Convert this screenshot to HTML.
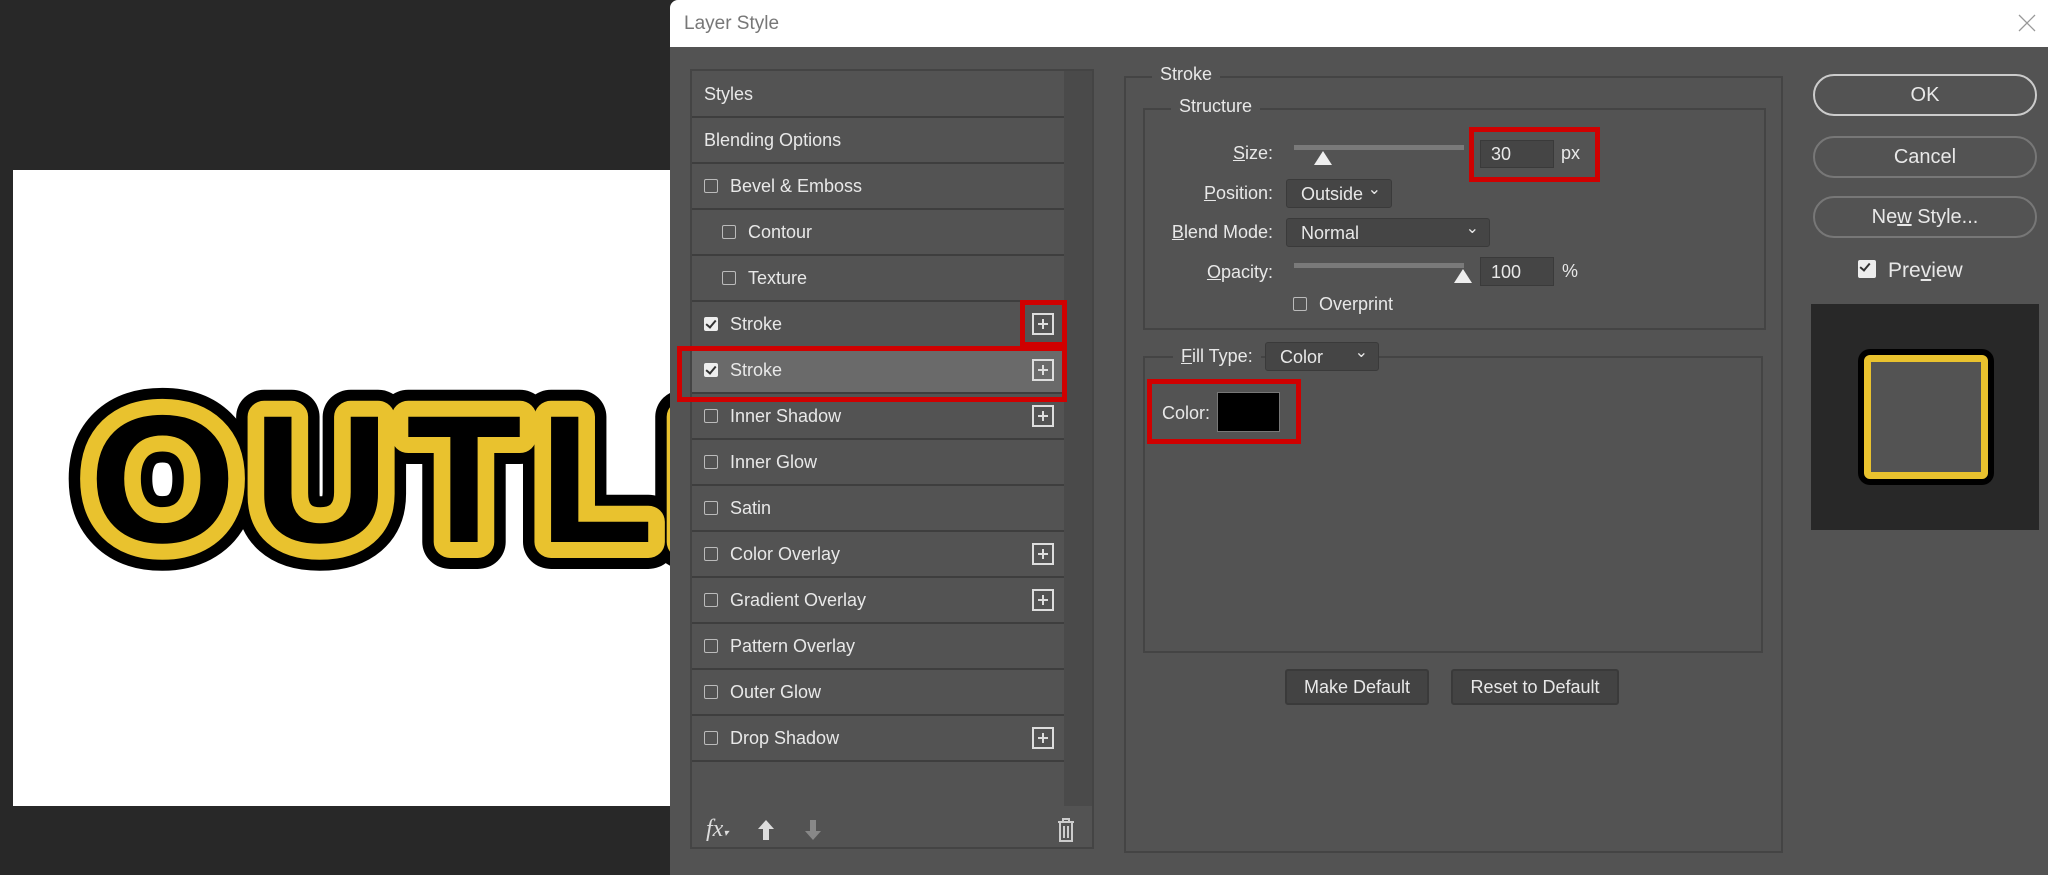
<!DOCTYPE html>
<html><head><meta charset="utf-8"><style>
*{margin:0;padding:0;box-sizing:border-box}
body{width:2048px;height:875px;background:#282828;position:relative;overflow:hidden;font-family:"Liberation Sans",sans-serif;color:#e8e8e8;font-size:18px}
.a{position:absolute}
.canvas{left:13px;top:170px;width:657px;height:636px;background:#fff;overflow:hidden}
.dlg{left:670px;top:0;width:1378px;height:875px;background:#535353;border-radius:8px 0 0 0;overflow:hidden}
.title{left:0;top:0;width:1378px;height:47px;background:#fff;color:#777;font-size:19px;padding:13px 0 0 14px}
.row{left:22px;width:372px;height:46px;background:#535353;border-bottom:2px solid #3e3e3e;line-height:44px;padding-left:12px}
.cb{display:inline-block;width:14px;height:14px;border:1.5px solid #bbb;border-radius:2px;vertical-align:-1px;margin-right:12px}
.cb.on{background:#eee;border-color:#eee;position:relative}
.cb.on:after{content:"";position:absolute;left:3px;top:0px;width:4px;height:8px;border:solid #333;border-width:0 2px 2px 0;transform:rotate(40deg)}
.plus{position:absolute;right:10px;top:11px;width:22px;height:22px;border:2px solid #ddd}
.plus:before{content:"";position:absolute;left:4px;top:8px;width:10px;height:2px;background:#ddd}
.plus:after{content:"";position:absolute;left:8px;top:4px;width:2px;height:10px;background:#ddd}
.red{border:5px solid #d00000}
.grp{border:2px solid #444}
.lbl{background:#535353;padding:0 8px}
.inp{background:#454545;border:1px solid #3a3a3a}
.dd{background:#454545;border:1px solid #3a3a3a;border-radius:3px;padding-left:14px;line-height:28px}
.dd:after{content:"⌄";position:absolute;right:10px;top:-4px;font-size:16px}
.btn{border:2px solid #ccc;border-radius:22px;text-align:center;font-size:20px;line-height:38px}
.rbtn{background:#434343;border:2px solid #3a3a3a;border-radius:3px;text-align:center;line-height:32px}
.thumb{width:0;height:0;border-left:9px solid transparent;border-right:9px solid transparent;border-bottom:14px solid #eee}
u{text-decoration:underline}
</style></head><body>
<div class="a canvas">
<svg width="657" height="636" style="position:absolute;left:0;top:0">
<g font-family="Liberation Sans" font-weight="bold" font-size="182" letter-spacing="16" transform="translate(76,0) scale(1.04,1)">
<text x="0" y="372" stroke="#000" stroke-width="54" stroke-linejoin="round" fill="#000">OUTLINE</text>
<text x="0" y="372" stroke="#e9c22e" stroke-width="32" stroke-linejoin="round" fill="#e9c22e">OUTLINE</text>
<text x="0" y="372" fill="#000">OUTLINE</text>
</g></svg>
</div>
<div class="a dlg">
<div class="a title">Layer Style</div>
<svg class="a" style="right:12px;top:14px" width="18" height="18"><path d="M1 1 L17 17 M17 1 L1 17" stroke="#999" stroke-width="1.3"/></svg>
<div class="a" style="left:20px;top:69px;width:404px;height:780px;border:2px solid #444"></div>
<div class="a" style="left:394px;top:71px;width:28px;height:735px;background:#4a4a4a"></div>
<div class="a row" style="top:72px">Styles</div>
<div class="a row" style="top:118px">Blending Options</div>
<div class="a row" style="top:164px"><span class="cb"></span>Bevel &amp; Emboss</div>
<div class="a row" style="top:210px;padding-left:30px"><span class="cb"></span>Contour</div>
<div class="a row" style="top:256px;padding-left:30px"><span class="cb"></span>Texture</div>
<div class="a row" style="top:302px"><span class="cb on"></span>Stroke<span class="plus"></span></div>
<div class="a row" style="top:348px;background:#6a6a6a"><span class="cb on"></span>Stroke<span class="plus"></span></div>
<div class="a row" style="top:394px"><span class="cb"></span>Inner Shadow<span class="plus"></span></div>
<div class="a row" style="top:440px"><span class="cb"></span>Inner Glow</div>
<div class="a row" style="top:486px"><span class="cb"></span>Satin</div>
<div class="a row" style="top:532px"><span class="cb"></span>Color Overlay<span class="plus"></span></div>
<div class="a row" style="top:578px"><span class="cb"></span>Gradient Overlay<span class="plus"></span></div>
<div class="a row" style="top:624px"><span class="cb"></span>Pattern Overlay</div>
<div class="a row" style="top:670px"><span class="cb"></span>Outer Glow</div>
<div class="a row" style="top:716px"><span class="cb"></span>Drop Shadow<span class="plus"></span></div>
<div class="a red" style="left:350px;top:300px;width:47px;height:47px"></div>
<div class="a red" style="left:7px;top:346px;width:390px;height:56px"></div>
<div class="a" style="left:36px;top:816px;font-style:italic;font-family:'Liberation Serif',serif;font-size:24px;color:#ddd">fx<span style="font-size:10px">▾</span></div>
<svg class="a" style="left:86px;top:818px" width="20" height="24"><path d="M10 2 L18 11 H13 V22 H7 V11 H2 Z" fill="#ddd"/></svg>
<svg class="a" style="left:133px;top:818px" width="20" height="24"><path d="M10 22 L18 13 H13 V2 H7 V13 H2 Z" fill="#888"/></svg>
<svg class="a" style="left:386px;top:817px" width="20" height="26"><path d="M2 5 H18 M7 5 V2 H13 V5 M4 6 V24 H16 V6 M8 9 V21 M12 9 V21" stroke="#ccc" stroke-width="2" fill="none"/></svg>
<div class="a grp" style="left:454px;top:76px;width:659px;height:777px"></div>
<div class="a lbl" style="left:482px;top:64px">Stroke</div>
<div class="a grp" style="left:473px;top:108px;width:623px;height:222px"></div>
<div class="a lbl" style="left:501px;top:96px">Structure</div>
<div class="a" style="left:540px;top:143px;width:63px;text-align:right"><u>S</u>ize:</div>
<div class="a" style="left:624px;top:145px;width:170px;height:5px;background:#7a7a7a"></div>
<div class="a thumb" style="left:644px;top:151px"></div>
<div class="a inp" style="left:810px;top:140px;width:74px;height:28px;padding:3px 10px">30</div>
<div class="a" style="left:891px;top:143px">px</div>
<div class="a red" style="left:799px;top:127px;width:131px;height:55px"></div>
<div class="a" style="left:480px;top:183px;width:123px;text-align:right"><u>P</u>osition:</div>
<div class="a dd" style="left:616px;top:179px;width:106px;height:29px">Outside</div>
<div class="a" style="left:480px;top:222px;width:123px;text-align:right"><u>B</u>lend Mode:</div>
<div class="a dd" style="left:616px;top:218px;width:204px;height:29px">Normal</div>
<div class="a" style="left:480px;top:262px;width:123px;text-align:right"><u>O</u>pacity:</div>
<div class="a" style="left:624px;top:263px;width:170px;height:5px;background:#7a7a7a"></div>
<div class="a thumb" style="left:784px;top:269px"></div>
<div class="a inp" style="left:810px;top:257px;width:74px;height:29px;padding:4px 10px">100</div>
<div class="a" style="left:892px;top:261px">%</div>
<div class="a" style="left:623px;top:294px"><span class="cb"></span>Overprint</div>
<div class="a grp" style="left:473px;top:356px;width:620px;height:297px"></div>
<div class="a lbl" style="left:503px;top:346px"><u>F</u>ill Type:</div>
<div class="a dd" style="left:595px;top:342px;width:114px;height:29px">Color</div>
<div class="a" style="left:492px;top:403px">Color:</div>
<div class="a" style="left:547px;top:392px;width:63px;height:40px;background:#000;border:1px solid #777"></div>
<div class="a red" style="left:477px;top:379px;width:154px;height:65px"></div>
<div class="a rbtn" style="left:615px;top:669px;width:144px;height:36px">Make Default</div>
<div class="a rbtn" style="left:781px;top:669px;width:168px;height:36px">Reset to Default</div>
<div class="a btn" style="left:1143px;top:74px;width:224px;height:42px">OK</div>
<div class="a btn" style="left:1143px;top:136px;width:224px;height:42px;border-color:#777">Cancel</div>
<div class="a btn" style="left:1143px;top:196px;width:224px;height:42px;border-color:#777">Ne<u>w</u> Style...</div>
<div class="a" style="left:1188px;top:259px;font-size:21px"><span class="cb on" style="width:18px;height:18px"></span>Pre<u>v</u>iew</div>
<div class="a" style="left:1141px;top:304px;width:228px;height:226px;background:#282828"></div>
<div class="a" style="left:1188px;top:349px;width:136px;height:136px;background:#000;border-radius:12px"></div>
<div class="a" style="left:1194px;top:355px;width:124px;height:124px;background:#535353;border:7px solid #e9c22e;border-radius:6px"></div>
</div>
</body></html>
